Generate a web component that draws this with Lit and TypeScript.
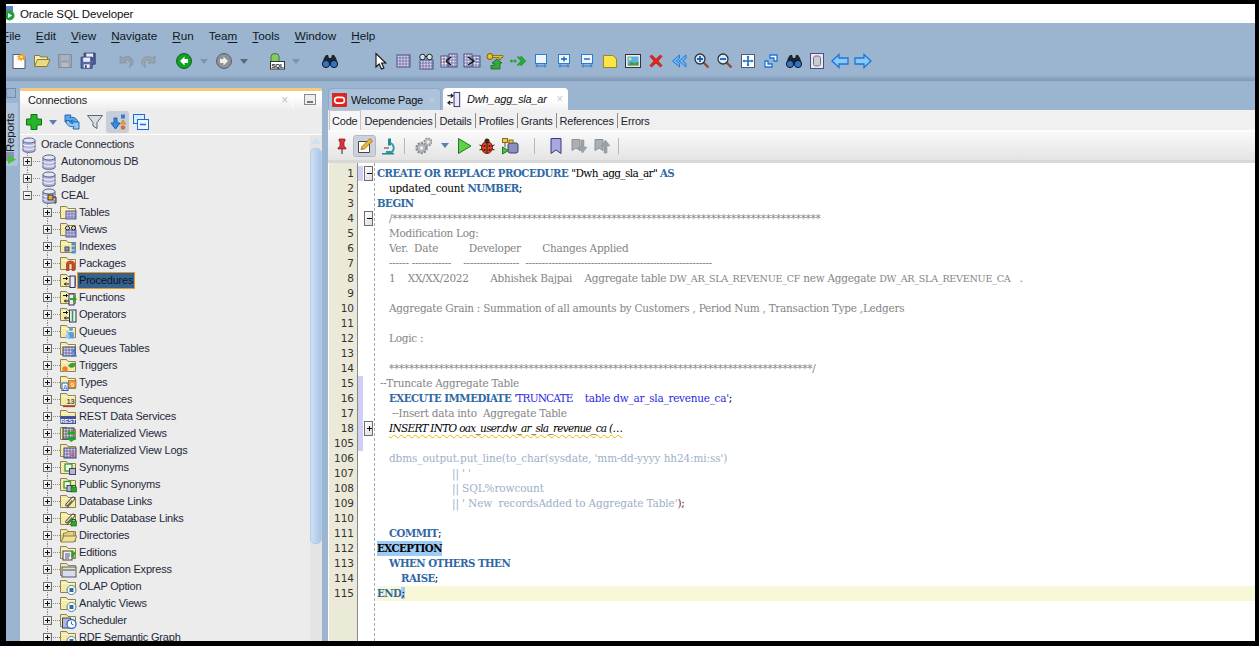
import { LitElement, html, css, svg, nothing } from 'lit';
import { customElement } from 'lit/decorators.js';

// ---- toolbar icons, all on an 18x18 box
const floppy = (c: string, d: string) => svg`<path d="M2.5 2.5h13v13h-13z" fill="${c}" stroke="${d}"/><path d="M5 3h8v5H5z" fill="#e8ecf4"/><path d="M5.5 11h7v4h-7z" fill="#f4f4f4"/><path d="M7 12h2v3H7z" fill="${d}"/>`;
const binoc = svg`<path d="M3 6l2-3h2l1 3h2l1-3h2l2 3 2 6H1z" fill="#20242c"/><circle cx="5" cy="12" r="3.6" fill="#2f76c8" stroke="#15181f"/><circle cx="13" cy="12" r="3.6" fill="#2f76c8" stroke="#15181f"/>`;
const gridLines = (x: number, y: number, w: number, h: number, f = '#d9d5ee', s = '#4c4c8a') => {
  const out = [svg`<rect x="${x}" y="${y}" width="${w}" height="${h}" fill="${f}" stroke="${s}"/>`];
  for (let i = x + 3; i < x + w; i += 3) out.push(svg`<path d="M${i} ${y}v${h}" stroke="${s}" stroke-width=".6"/>`);
  for (let j = y + 3; j < y + h; j += 3) out.push(svg`<path d="M${x} ${j}h${w}" stroke="${s}" stroke-width=".6"/>`);
  return out;
};
const tableLegs = (inner: unknown) => svg`<rect x="3.5" y="2.5" width="11" height="9" fill="#eef5fd" stroke="#2a7bd8"/><path d="M5 11.5v4M13 11.5v4M3.5 14h11" stroke="#2a7bd8" fill="none"/>${inner}`;
const lens = (inner: unknown) => svg`<path d="M10.5 10.5l5 5" stroke="#8a4a3a" stroke-width="2.4"/><circle cx="7" cy="7" r="5" fill="#d8ecff" stroke="#30343c" stroke-width="1.3"/>${inner}`;

const TOOL: Record<string, unknown> = {
  newfile: svg`<path d="M3 2.500h9l3 3v11H3z" fill="#fdfdfd" stroke="#55597a"/><path d="M11 1l1.200 2.200L14.600 2l-.6 2.400L16.400 5l-2.200 1.200L15 8.600l-2.600-1L11 9.600 10 7.400 7.600 8l1-2.400L6.600 4l2.600-.4z" fill="#f6a21a"/><circle cx="11.400" cy="5" r="1.300" fill="#ffe98a"/>`,
  open: svg`<path d="M1.500 14.500V3.500h5l1 1.500h7v2.500" fill="#f5eeb6" stroke="#8b7a30"/><path d="M1.500 14.500L4.500 7.500h12.500l-3 7z" fill="#eadb83" stroke="#8b7a30"/>`,
  save: svg`<path d="M2.500 2.500h13v13h-13z" fill="#9ca6b2" stroke="#858e9a"/><path d="M5 3h8v5H5z" fill="#a9b2bd"/><path d="M5.500 11h7v4h-7z" fill="#b5bcc5"/>`,
  saveall: svg`<g transform="translate(3 -1) scale(.85)">${floppy('#4f5b96', '#2e3668')}</g><g transform="translate(0 3) scale(.85)">${floppy('#5b68a8', '#2e3668')}</g>`,
  undo: svg`<path d="M3 4v7h7L7.600 8.600c3-1.600 5.600 0 5.600 3.400 0 1.400-.5 2.600-1.200 3.400 3.400-1.400 4.600-4 4-6.600C15 4.600 10 3.300 6 6.100z" fill="#97a2ae" stroke="#7f8a97" stroke-width=".6"/>`,
  redo: svg`<g transform="matrix(-1 0 0 1 18 0)"><path d="M3 4v7h7L7.600 8.600c3-1.600 5.600 0 5.600 3.400 0 1.400-.5 2.600-1.200 3.400 3.400-1.400 4.600-4 4-6.600C15 4.600 10 3.300 6 6.100z" fill="#9aa5b0" stroke="#808b98" stroke-width=".6"/></g>`,
  back: svg`<circle cx="9" cy="9" r="7.500" fill="#12a024" stroke="#0b6a18"/><path d="M9.500 4.500L5 9l4.500 4.500V11H13V7H9.500z" fill="#fff"/>`,
  fwd: svg`<circle cx="9" cy="9" r="7.500" fill="#8c9298" stroke="#5d6268"/><path d="M8.500 4.500L13 9l-4.500 4.500V11H5V7h3.500z" fill="#eee"/>`,
  sql: svg`<ellipse cx="8" cy="4.500" rx="4" ry="3" fill="#86c96a" stroke="#3d7f2c"/><path d="M4 4.500v5h8v-5" fill="#86c96a" stroke="#3d7f2c"/><rect x="3.500" y="9.500" width="14" height="7.500" fill="#fff" stroke="#333"/><text x="10.500" y="15.600" font-size="6.200" font-weight="700" text-anchor="middle" font-family="Liberation Sans" fill="#111">SQL</text>`,
  binoc,
  cursor: svg`<path d="M5 1.500v13.500l3.200-3 2.300 5 2.400-1.100-2.300-4.900h4.200z" fill="#fff" stroke="#111" stroke-width="1.100"/>`,
  grid: svg`${gridLines(3, 3, 13, 12)}`,
  glass: svg`${gridLines(3, 8, 13, 9)}<circle cx="5.500" cy="5" r="2.800" fill="#c8e8ee" stroke="#222"/><circle cx="12.500" cy="5" r="2.800" fill="#c8e8ee" stroke="#222"/><path d="M8 4.500h2" stroke="#222"/>`,
  diff1: svg`${gridLines(1, 4, 7, 11, '#f4f2fb')}${gridLines(9, 2, 8, 13, '#e5e2f4')}<path d="M3 7h1.500M3 10h1.500" stroke="#e03030"/><path d="M6 9l5-4M6 9l5 4" stroke="#111" stroke-width="1.400"/>`,
  diff2: svg`${gridLines(1, 2, 8, 13, '#e5e2f4')}${gridLines(10, 4, 7, 11, '#f4f2fb')}<path d="M13 7h2M13 10h2" stroke="#2060d0"/><path d="M5 5l6 4-6 4" stroke="#111" stroke-width="1.400" fill="none"/>`,
  key: svg`<circle cx="4" cy="4.500" r="3" fill="#f0c020" stroke="#7a5b08"/><path d="M6.500 3.500H17v2h-2v2h-2v-2H6.500z" fill="#f0c020" stroke="#7a5b08" stroke-width=".7"/><path d="M5 17v-3.500h3V11H6l5-4 5 4h-2v6z" fill="#35a83a" stroke="#17641c" stroke-width=".8"/>`,
  dots: svg`<circle cx="2.500" cy="9" r="1.500" fill="#23a030"/><circle cx="6" cy="9" r="1.500" fill="#23a030"/><path d="M8.500 4.500L13 9l-4.500 4.500M11.500 4.500L16 9l-4.500 4.500" fill="none" stroke="#23a030" stroke-width="1.800"/>`,
  tbl: tableLegs(nothing),
  tblplus: tableLegs(svg`<path d="M6 7h6M9 4.500v5" stroke="#1c5aa8" stroke-width="1.300"/>`),
  tblminus: tableLegs(svg`<path d="M6 7h6" stroke="#1c5aa8" stroke-width="1.300"/>`),
  note: svg`<path d="M2.500 3.500h9.500l3.500 3.500v8.500h-13z" fill="#fde44a" stroke="#9a8a1c"/>`,
  image: svg`<rect x="1.500" y="2.500" width="15" height="13" fill="#eee" stroke="#333"/><rect x="3.500" y="4.500" width="11" height="9" fill="#59b4ea"/><path d="M3.500 13.500l4-4 3 2 4-2v4z" fill="#4c9a35"/><circle cx="6" cy="7" r="1.400" fill="#fbe65a"/>`,
  x: svg`<path d="M3 4.500L4.500 3 9 7l4.500-4L15 4.500 11 9l4 4.500-1.500 1.500L9 11l-4.500 4L3 13.500 7 9z" fill="#e5261a" stroke="#a31a10" stroke-width=".7"/>`,
  dbl: svg`<path d="M9.500 3L2.500 9l7 6v-3.500L6.500 9l3-2.500zM16 3L9 9l7 6v-3.500L13 9l3-2.500z" fill="#6ab4f4" stroke="#1c76d6" stroke-width=".9"/>`,
  zoomin: lens(svg`<path d="M4 7h6M7 4v6" stroke="#1d5fb0" stroke-width="1.800"/>`),
  zoomout: lens(svg`<path d="M4 7h6" stroke="#1d5fb0" stroke-width="1.800"/>`),
  fit: svg`<rect x="2.500" y="2.500" width="13" height="13" fill="#fff" stroke="#555a70"/><path d="M9 4v10M4 9h10" stroke="#1c6fd0" stroke-width="1.600"/><path d="M7.500 5.500L9 3.500l1.500 2M7.500 12.500L9 14.500l1.500-2M5.500 7.500L3.500 9l2 1.500M12.500 7.500L14.500 9l-2 1.500" fill="#1c6fd0"/>`,
  expand: svg`<path d="M3 9v6h7v-3H6V9zM15 9V3H8v3h4v3z" fill="#fff" stroke="#1c76d6" stroke-width="1.300"/>`,
  dbpage: svg`<rect x="2.500" y="1.500" width="13" height="15" fill="#e9e7f5" stroke="#4c4c8a"/><ellipse cx="9" cy="5.500" rx="3.500" ry="1.600" fill="#c8ccd4" stroke="#777"/><path d="M5.500 5.500v7c0 2 7 2 7 0v-7" fill="#c8ccd4" stroke="#777"/>`,
  left: svg`<path d="M1 9l7-6.500V6h9v6H8v3.500z" fill="#8cc8f8" stroke="#1c76d6" stroke-width="1.300"/>`,
  right: svg`<path d="M17 9l-7-6.500V6H1v6h9v3.500z" fill="#8cc8f8" stroke="#1c76d6" stroke-width="1.300"/>`,
  add: svg`<path d="M6 1.500h6V6h4.500v6H12v4.500H6V12H1.500V6H6z" fill="#27b52c" stroke="#0f6f14"/>`,
  refresh: svg`<path d="M2 2h6L7 4.500c4.500-1 8 1.500 8 6h-3.500c0-2.500-1.500-3.500-3.500-3L9.500 9H2z" fill="#5aa6ea" stroke="#1c5da8" stroke-width=".9"/><path d="M16 16h-6l1-2.500c-4.500 1-8-1.500-8-6h3.500c0 2.500 1.500 3.500 3.500 3L8.500 9H16z" fill="#8cc8f8" stroke="#1c5da8" stroke-width=".9"/>`,
  filter: svg`<path d="M1.500 2.500h15L11 9.500v6l-4-2.500V9.500z" fill="#d8dce6" stroke="#5e6478"/>`,
  sort: svg`<path d="M3 7h3V2h3v5h3l-4.500 6z" transform="translate(-1 3)" fill="#3a8be0" stroke="#1c5da8"/><rect x="12" y="1.500" width="4" height="4" fill="#3a7bd0"/><path d="M14 7l2.500 4h-5z" fill="#e9b020" stroke="#8b6a10" stroke-width=".5"/><circle cx="14" cy="14.500" r="2.300" fill="#e06a30"/>`,
  collapse: svg`<rect x="1.500" y="1.500" width="11" height="9" fill="#d9ebff" stroke="#1c6fd0"/><rect x="5.500" y="6.500" width="11" height="10" fill="#eef6ff" stroke="#1c6fd0"/><path d="M8 11.500h6" stroke="#1c6fd0" stroke-width="1.500"/>`,
  pin: svg`<path d="M6 2h6v2l-1 1v4l2 2v1H5v-1l2-2V5L6 4z" fill="#d8333a" stroke="#8a1a20" stroke-width=".7"/><path d="M9 12v5" stroke="#555" stroke-width="1.300"/>`,
  pencil: svg`<path d="M2.500 4.500h11v11h-11z" fill="#fff" stroke="#444"/><path d="M5 12.500l1-3 8-8 2.500 2.500-8 8z" fill="#f2b632" stroke="#7a5c14" stroke-width=".7"/>`,
  micro: svg`<path d="M3 16h12v1.500H3zM9 1.500h3v7H9z" fill="#1f8a90"/><path d="M11 6c4 1 5 6 2 9H7" fill="none" stroke="#2c9aa0" stroke-width="1.800"/><path d="M5 11h5" stroke="#777" stroke-width="1.500"/>`,
  gears: svg`<circle cx="7.500" cy="11" r="5" fill="#b4b8bc" stroke="#8a8e92" stroke-width="2.400" stroke-dasharray="2 1.200"/><circle cx="7.500" cy="11" r="1.800" fill="#eee"/><circle cx="14" cy="5" r="3.600" fill="#c4c8cc" stroke="#94989c" stroke-width="2" stroke-dasharray="1.800 1"/><circle cx="14" cy="5" r="1.300" fill="#eee"/>`,
  play: svg`<path d="M3.500 1.500L16 9 3.500 16.500z" fill="#5fd04a" stroke="#1d7d1f"/>`,
  bug: svg`<ellipse cx="9" cy="10.500" rx="5.500" ry="6" fill="#e8421a" stroke="#7a1a08"/><circle cx="9" cy="4" r="2.500" fill="#3a2a20"/><path d="M9 5v11M1.500 8l3 1M1.500 13l3-1M16.500 8l-3 1M16.500 13l-3-1" stroke="#222"/><circle cx="6.500" cy="9" r="1" fill="#222"/><circle cx="11.500" cy="9" r="1" fill="#222"/><circle cx="6.500" cy="13" r="1" fill="#222"/><circle cx="11.500" cy="13" r="1" fill="#222"/>`,
  plan: svg`<rect x="7" y="6" width="10" height="10" rx="2" fill="#8a8fbe" stroke="#3c3f70"/><rect x="1.500" y="1.500" width="5" height="4" fill="#f2c94a" stroke="#8a6a10"/><rect x="8" y="3" width="4" height="3" fill="#f2c94a" stroke="#8a6a10"/><path d="M1.500 10l6 3.500-6 3.500z" fill="#52c040" stroke="#1d7d1f"/><path d="M4 5.500V10" stroke="#555"/>`,
  mark: svg`<path d="M4 1.500h10v15l-5-3.500-5 3.500z" fill="#a9a7e0" stroke="#3a3a7a"/>`,
  marknext: svg`<path d="M2 2.500h8v11l-4-2.500-4 2.500z" fill="#aab0b6" stroke="#8a9096"/><path d="M11 3h3v7h3l-4.500 6L8 10h3z" fill="#9aa2a8" stroke="#8a9096" stroke-width=".5"/>`,
  markprev: svg`<path d="M2 2.500h8v11l-4-2.500-4 2.500z" fill="#aab0b6" stroke="#8a9096"/><path d="M11 16h3V9h3l-4.500-6L8 9h3z" fill="#9aa2a8" stroke="#8a9096" stroke-width=".5"/>`,
  oracle: svg`<rect x="0.500" y="1.500" width="16" height="15" fill="#e8201a" stroke="#a01510" stroke-width=".5"/><rect x="3" y="6" width="11" height="6.500" rx="3.200" fill="none" stroke="#fff" stroke-width="1.800"/>`,
  proc: svg`<rect x="8.500" y="1.500" width="6" height="15" fill="#e8e6f8" stroke="#30305a"/><path d="M1.500 5H7M5 3l2.500 2L5 7M7.500 12.500H2M4.500 10.500L2 12.500l2.500 2" fill="none" stroke="#111" stroke-width="1.100"/>`,
};

const toolIcon = (n: string, size = 18) => html`<svg class="ic" width="${size}" height="${size}" viewBox="0 0 18 18">${TOOL[n]}</svg>`;

// ---- tree icons
const db = (c = '#b4b8dc', s = '#5a5e8a') => svg`<path d="M2 3.500v10c0 2.400 12 2.400 12 0v-10" fill="${c}" stroke="${s}"/><ellipse cx="8" cy="3.500" rx="6" ry="2.500" fill="#e4e6f4" stroke="${s}"/><path d="M2 7c0 2.400 12 2.400 12 0M2 10.500c0 2.400 12 2.400 12 0" fill="none" stroke="#fff" stroke-width=".9"/>`;
const folderBase = svg`<path d="M.5 14.500V2.500h6l1.500 2h7.500v10z" fill="#f4ebaa" stroke="#8f8548"/><path d="M1.500 5.500h13" stroke="#fff8cc"/>`;
const arrows = svg`<path d="M3 6.500h4.500M6 5l1.500 1.500L6 8M9 12H4.500M6 10.500L4.500 12 6 13.500" fill="none" stroke="#111"/>`;
const clip = svg`<path d="M6 15l7-8c2-2.500-1-4-2.500-2L5 11c-1 1.500 .5 2.500 1.500 1.500L11 7.500" fill="none" stroke="#555" stroke-width="1.100" transform="translate(1 0)"/>`;
const lock = svg`<rect x="11" y="11" width="5.500" height="5" fill="#2aa82a" stroke="#0f5f0f" stroke-width=".6"/><path d="M12 11V9.500h3.500V11" fill="none" stroke="#0f5f0f"/>`;
const cube = svg`<circle cx="11.500" cy="12" r="4.500" fill="#fff" stroke="#4a7ab0"/><rect x="9.500" y="10" width="4" height="4" fill="#2f6f8f"/>`;

const OVER: Record<string, unknown> = {
  tables: gridLines(6, 7, 10, 8, '#c9c5e6', '#5a5a9a'),
  views: svg`${gridLines(6, 9, 10, 7, '#c9c5e6', '#5a5a9a')}<circle cx="7.500" cy="7" r="2" fill="#cfe6ee" stroke="#222"/><circle cx="13.500" cy="7" r="2" fill="#cfe6ee" stroke="#222"/>`,
  indexes: svg`<rect x="5" y="9" width="4" height="4" fill="#8a92c8" stroke="#445"/><rect x="11.500" y="4.500" width="4" height="3" fill="#4a90d8"/><rect x="11.500" y="8.500" width="4" height="3" fill="#4a90d8"/><rect x="11.500" y="12.500" width="4" height="3" fill="#4a90d8"/>`,
  packages: svg`<path d="M6.500 15.500v-7c0-3.500 8-3.500 8 0v7h-2.500v-6c0-1-3-1-3 0v6z" fill="#d8452e" stroke="#8a2214" stroke-width=".6"/>`,
  procedures: svg`${arrows}<rect x="10" y="4" width="5" height="11.500" fill="#eceafa" stroke="#30305a"/>`,
  functions: svg`${arrows}<rect x="9" y="5" width="5" height="11" fill="#eceafa" stroke="#30305a"/><path d="M10 9h3V6.500l4 3.500-4 3.500V11h-3z" fill="#2aa82a"/>`,
  operators: svg`${arrows}<rect x="9.500" y="4" width="6.500" height="12" fill="#eceafa" stroke="#30305a"/><path d="M12.500 5v10" stroke="#2aa82a" stroke-width="1.500"/>`,
  queues: svg`<circle cx="11" cy="6" r="2" fill="#5a9ee0"/><path d="M8 15.500V10c0-1.500 6-1.500 6 0v5.500z" fill="#5a9ee0"/><circle cx="7.500" cy="9" r="1.500" fill="#9cc6ee"/><path d="M5.500 15.500V12c0-1 4-1 4 0v3.500z" fill="#9cc6ee"/>`,
  qtables: svg`${gridLines(3, 7, 12, 9, '#d8d4f0', '#3a3a7a')}<circle cx="14" cy="11" r="1.700" fill="#3a80d0"/><path d="M11 16.500c0-3 6-3 6 0z" fill="#3a80d0"/>`,
  triggers: svg`<path d="M8 9c2-4 6-4 8-2-1 4-5 5-8 2z" fill="#3fa03a"/><circle cx="5" cy="12" r="2.800" fill="#f08030"/>`,
  types: svg`<rect x="2" y="9" width="6" height="7.500" fill="#fff" stroke="#2060c0"/><text x="5" y="15.500" font-size="6.500" text-anchor="middle" fill="#2060c0" font-family="Liberation Sans">A</text><rect x="8.500" y="6.500" width="7.500" height="7" fill="#f09a40" stroke="#a05a10" stroke-width=".6"/><text x="12.200" y="12.500" font-size="6" text-anchor="middle" fill="#fff" font-family="Liberation Sans">9</text>`,
  sequences: svg`<text x="10.500" y="13" font-size="7.500" font-weight="700" text-anchor="middle" fill="#555" font-family="Liberation Sans">13</text><path d="M3 15.500h12" stroke="#c8302a" stroke-width="1.300"/>`,
  rest: svg`<rect x=".5" y="8" width="15.500" height="8" fill="#45509a"/><text x="8.200" y="14.700" font-size="6" font-weight="700" text-anchor="middle" fill="#fff" font-family="Liberation Sans">REST</text>`,
  matviews: svg`${gridLines(3, 3, 11, 11, '#d8d4f0', '#333')}<path d="M7 8l3-3v2h5v2h-5v2zM16 11l-3 3v-2H8v2l3 3 5-3z" fill="#25a52a"/>`,
  matlogs: svg`${gridLines(4, 6, 12, 10, '#d8d4f0', '#3a3a7a')}<path d="M10.500 11h4M10.500 13.500h4" stroke="#e05030"/>`,
  synonyms: svg`<rect x="5" y="5" width="7" height="7" fill="#eef8e0" stroke="#3a9a3a" stroke-width="1.300"/><rect x="9.500" y="9.500" width="6" height="6" fill="#b4b4e0" stroke="#445"/>`,
  publicsyn: svg`<rect x="4" y="5.500" width="6.500" height="6.500" fill="#eef8e0" stroke="#3a9a3a" stroke-width="1.300"/><rect x="7" y="9.500" width="5" height="6" fill="#b4b4e0" stroke="#445"/>${lock}`,
  dblink: clip,
  pubdblink: svg`${clip}${lock}`,
  dirs: svg`<path d="M1 15V8l2-1v7z" fill="#ddc878"/><path d="M3.500 14V6h3l1-1.500H14V14z" fill="#e2d07e" stroke="#8f8548"/><path d="M1 15l3-6h13l-3 6z" fill="#f0e09a" stroke="#8f8548"/>`,
  editions: svg`<rect x="3" y="7" width="9" height="9" fill="#f0effa" stroke="#445"/><path d="M5 10h5M5 12h5M5 14h4" stroke="#556"/><path d="M12 6l4 3.500-2 2 1 3-4-2z" fill="#30a030"/>`,
  apex: svg`<rect x="2" y="6" width="14" height="10" fill="#dcdcf0" stroke="#556"/><path d="M2 9h14" stroke="#8a9a70" stroke-width="1.800"/>`,
  olap: cube,
  analytic: cube,
  scheduler: svg`<rect x="2.500" y="6" width="8" height="10" fill="#b4b4e0" stroke="#445"/><circle cx="11.500" cy="12" r="4.500" fill="#fff" stroke="#2a6fc0" stroke-width="1.300"/><path d="M11.500 9.500V12l2 1" stroke="#2a6fc0" fill="none"/>`,
  rdf: cube,
};

const TREE: [string, string][] = [
  ['Tables', 'tables'], ['Views', 'views'], ['Indexes', 'indexes'], ['Packages', 'packages'],
  ['Procedures', 'procedures'], ['Functions', 'functions'], ['Operators', 'operators'], ['Queues', 'queues'],
  ['Queues Tables', 'qtables'], ['Triggers', 'triggers'], ['Types', 'types'], ['Sequences', 'sequences'],
  ['REST Data Services', 'rest'], ['Materialized Views', 'matviews'], ['Materialized View Logs', 'matlogs'],
  ['Synonyms', 'synonyms'], ['Public Synonyms', 'publicsyn'], ['Database Links', 'dblink'],
  ['Public Database Links', 'pubdblink'], ['Directories', 'dirs'], ['Editions', 'editions'],
  ['Application Express', 'apex'], ['OLAP Option', 'olap'], ['Analytic Views', 'analytic'],
  ['Scheduler', 'scheduler'], ['RDF Semantic Graph', 'rdf'],
];

// num, indent in px, then [class, text] pieces
type Line = [string, number, [string, string][]];
const stars = (n: number) => '*'.repeat(n);
const dashes = (n: number) => '-'.repeat(n);
const CODE: Line[] = [
  ['1', 0, [['k', 'CREATE OR REPLACE PROCEDURE '], ['q', '"Dwh_agg_sla_ar" '], ['k', 'AS']]],
  ['2', 12, [['', 'updated_count '], ['k', 'NUMBER'], ['', ';']]],
  ['3', 0, [['k', 'BEGIN']]],
  ['4', 12, [['c', '/' + stars(86)]]],
  ['5', 12, [['c', 'Modification Log:']]],
  ['6', 12, [['c', 'Ver.  Date          Developer       Changes Applied']]],
  ['7', 12, [['c', `${dashes(6)} ${dashes(12)}    ${dashes(17)}  ${dashes(57)}`]]],
  ['8', 12, [['c', '1    XX/XX/2022       Abhishek Bajpai    Aggregate table '], ['cu', 'DW_AR_SLA_REVENUE_CF'], ['c', ' new Aggegate '], ['cu', 'DW_AR_SLA_REVENUE_CA'], ['c', '   .']]],
  ['9', 0, []],
  ['10', 12, [['c', 'Aggregate Grain : Summation of all amounts by Customers , Period Num , Transaction Type ,Ledgers']]],
  ['11', 0, []],
  ['12', 12, [['c', 'Logic :']]],
  ['13', 0, []],
  ['14', 12, [['c', stars(85) + '/']]],
  ['15', 3, [['c', '--Truncate Aggregate Table']]],
  ['16', 12, [['k', 'EXECUTE IMMEDIATE '], ['su', "'TRUNCATE"], ['s', '    table dw_ar_sla_revenue_ca\''], ['', ';']]],
  ['17', 15, [['c', '--Insert data into  Aggregate Table']]],
  ['18', 12, [['w', 'INSERT INTO oax_user.dw_ar_sla_revenue_ca (…']]],
  ['105', 0, []],
  ['106', 12, [['d', "dbms_output.put_line(to_char(sysdate, 'mm-dd-yyyy hh24:mi:ss')"]]],
  ['107', 75, [['d', "|| ' '"]]],
  ['108', 75, [['d', '|| SQL%rowcount']]],
  ['109', 75, [['d', "|| ' New  recordsAdded to Aggregate Table'"], ['pn', ');']]],
  ['110', 0, []],
  ['111', 12, [['k', 'COMMIT'], ['', ';']]],
  ['112', 0, [['sel', 'EXCEPTION']]],
  ['113', 12, [['k', 'WHEN OTHERS THEN']]],
  ['114', 24, [['k', 'RAISE'], ['', ';']]],
  ['115', 0, [['k', 'END'], ['hit', ';']]],
];
const MARKED = new Set(['1', '15', '16', '17', '18', '105']);
const FOLD: Record<string, string> = { '1': '-', '4': '-', '18': '+' };

const MENU: [string, string, string][] = [
  ['', 'F', 'ile'], ['', 'E', 'dit'], ['', 'V', 'iew'], ['', 'N', 'avigate'], ['', 'R', 'un'],
  ['Tea', 'm', ''], ['', 'T', 'ools'], ['', 'W', 'indow'], ['', 'H', 'elp'],
];

@customElement('app-root')
export class AppRoot extends LitElement {
  static styles = css`
    :host {
      display: block;
      width: 1259px;
      height: 646px;
      box-sizing: border-box;
      padding: 4px 4px 5px 6px;
      background: #000;
      overflow: hidden;
      font-family: 'Liberation Sans', sans-serif;
      font-size: 11px;
      letter-spacing: -0.2px;
      color: #1c2430;
    }
    .ic { display: block; flex: none; }
    .frame { height: 100%; display: flex; flex-direction: column; background: #9bb5d0; overflow: hidden; }

    .title { height: 19px; flex: none; background: #fff; display: flex; align-items: center; font-size: 11.5px; letter-spacing: -0.1px; color: #111; }
    .title svg { margin: 0 5px 0 0; }

    .menu { height: 24px; flex: none; display: flex; align-items: center; font-size: 11.7px; letter-spacing: 0; color: #101820; }
    .menu .mi { margin-right: 15px; }
    .menu .mi:first-child { margin-left: -4px; }
    .menu u { text-underline-offset: 2px; }

    .tools { height: 28px; flex: none; display: flex; align-items: center; padding-left: 1px; }
    .b { width: 23px; height: 22px; flex: none; display: flex; align-items: center; justify-content: center; }
    .dd { width: 17px; flex: none; display: flex; justify-content: center; }
    .dd::before { content: ''; border: 4px solid transparent; border-top: 5px solid #7f93aa; border-bottom: 0; }
    .dd.dark::before { border-top-color: #5e6a78; }
    .dd.blue::before { border-top-color: #5a7fb0; }
    .g12 { width: 12px; flex: none; } .g14 { width: 14px; flex: none; } .g15 { width: 15px; flex: none; } .g27 { width: 27px; flex: none; }
    .split { height: 6px; flex: none; background: linear-gradient(#9bb5d0, #7d97b6); }

    .main { flex: 1; min-height: 0; display: flex; }
    .side { width: 14px; flex: none; padding-top: 7px; display: flex; flex-direction: column; overflow: hidden; }
    .side .sicon { width: 10px; height: 10px; border: 1px solid #6f8fb2; margin-bottom: 5px; box-sizing: border-box; }
    .side .stab {
      height: 63px; width: 12px; background: #afc5dc; display: flex; flex-direction: column;
      border-radius: 0 0 3px 0; overflow: hidden;
    }
    .side .stxt {
      writing-mode: vertical-rl; transform: rotate(180deg); height: 46px; margin-top: 3px; width: 12px;
      line-height: 9px; font-size: 11.5px; color: #222; text-align: left; white-space: nowrap;
    }

    .left { width: 302px; flex: none; margin-top: 7px; display: flex; flex-direction: column; background: #ececec; border-radius: 3px 3px 0 0; overflow: hidden; }
    .lhead {
      height: 17px; padding-bottom: 2px; flex: none; border-top: 3px solid #f6c97c; display: flex; align-items: center;
      padding-left: 8px; background: linear-gradient(#fff 30%, #ececec); color: #222;
    }
    .lhead .nm { flex: 1; }
    .lhead .cl { color: #c0c0c0; font-size: 12px; margin-right: 4px; }
    .lhead .sp { width: 1px; height: 16px; background: #fff; margin-right: 11px; }
    .lhead .mini { width: 10px; height: 9px; border: 1px solid #8a8a8a; background: #eee; margin-right: 6px; display: flex; align-items: flex-end; justify-content: center; }
    .lhead .mini::before { content: ''; width: 6px; height: 2px; background: #777; margin-bottom: 1px; }
    .ltools { height: 24px; flex: none; display: flex; align-items: center; padding-left: 2px; }
    .ltools .on { background: #c7ced9; border-radius: 3px; }
    .ltools .dd { width: 15px; }

    .lbody { flex: 1; min-height: 0; display: flex; background: #ececec; border-top: 1px solid #fff; }
    .tree { flex: 1; min-width: 0; overflow: hidden; padding-top: 1px; }
    .row { height: 17px; display: flex; align-items: center; color: #1e2a38; white-space: nowrap; }
    .row .lbl { margin-left: 3px; padding: 0 1px; line-height: 15px; }
    .row .lbl.sub2 { margin-left: 1px; }
    .row .lbl.cur { background: #37628f; outline: 1px solid #e89a20; color: #0c1826; padding: 0 1px; }
    .exp {
      flex: none; height: 17px; display: flex; align-items: center; box-sizing: border-box;
      background-repeat: no-repeat;
      background-image:
        repeating-linear-gradient(to bottom, #8a8a8a 0 1px, transparent 1px 2px),
        repeating-linear-gradient(to right, #8a8a8a 0 1px, transparent 1px 2px);
    }
    .exp.l1 { width: 21px; padding-left: 3px; background-size: 1px 100%, 14px 1px; background-position: 7px 0, 7px 8px; }
    .exp.l1.end { background-size: 1px 50%, 14px 1px; }
    .exp.l2 { width: 40px; padding-left: 23px; background-size: 1px 100%, 13px 1px; background-position: 27px 0, 27px 8px; }
    .box { width: 9px; height: 9px; box-sizing: border-box; border: 1px solid #6e6e6e; background: linear-gradient(135deg, #fff, #ddd); display: flex; align-items: center; justify-content: center; position: relative; }
    .box::before { content: ''; width: 5px; height: 1px; background: #111; }
    .box.plus::after { content: ''; position: absolute; width: 1px; height: 5px; background: #111; }

    .sbar { width: 12px; flex: none; background: #e4e4e4; display: flex; flex-direction: column; align-items: center; }
    .sbar .up { border: 5px solid transparent; border-bottom: 6px solid #cfe0f2; border-top: 0; margin: 3px 0 4px; }
    .sbar .th { width: 12px; height: 396px; box-sizing: border-box; background: linear-gradient(to right, #cfe0f3, #a8c6e8); border: 1px solid #b4cbe4; border-radius: 5px; }

    .right { flex: 1; min-width: 0; margin-left: 6px; margin-top: 7px; display: flex; flex-direction: column; }
    .tabs { height: 22px; flex: none; display: flex; gap: 2px; align-items: flex-end; }
    .tab { height: 22px; box-sizing: border-box; display: flex; align-items: center; border-radius: 4px 4px 0 0; color: #111; white-space: nowrap; }
    .tab.off { width: 113px; background: #abc2da; padding-left: 3px; border: 1px solid #8fa8c4; border-bottom: 0; }
    .tab.off .t { margin-left: 3px; flex: 1; }
    .tab.on { width: 125px; background: linear-gradient(#fff 60%, #f0f0f0); padding-left: 3px; }
    .tab.on .t { font-style: italic; margin-left: 4px; flex: 1; }
    .tab .x { color: #c4ccd6; font-size: 12px; margin-right: 5px; }
    .sub { height: 21px; flex: none; display: flex; align-items: stretch; background: #f0f0f0; border-bottom: 1px solid #fff; box-sizing: border-box; padding-left: 1px; }
    .sub .st { display: flex; align-items: center; padding: 0 3px; border-left: 1px solid #8c8c8c; margin: 3px 0 2px; }
    .sub .st.first { border-left: 0; padding-left: 4px; }
    .sub .st.now { border: 1px solid #c4c4c4; border-bottom: 0; margin: 0; padding: 0 2px; background: #f6f6f6; }
    .etools { height: 29px; flex: none; display: flex; align-items: center; padding-left: 2px; background: linear-gradient(#fafafa, #e4e4e4); }
    .etools .on { background: #ccd2db; border: 1px solid #b4bac4; border-radius: 3px; box-sizing: border-box; }
    .etools .sep { width: 1px; height: 16px; background: #b8b8b8; flex: none; }
    .etools .dd { width: 14px; margin-left: 4px; }
    .sa { margin: 0 6px 0 5px; } .sb { margin: 0 9px 0 13px; } .sc { margin: 0 0 0 5px; }

    .editor { flex: 1; min-height: 0; display: flex; border-top: 3px solid #d8d8d8; background: #fff; overflow: hidden; padding-left: 1px; }
    .gut { width: 29px; flex: none; box-sizing: border-box; padding-top: 3px; background: #ebe9d8; border-right: 1px solid #8a8a8a; text-align: right; font-family: 'DejaVu Sans', sans-serif; font-size: 10.5px; letter-spacing: 0; color: #333; }
    .gut div { height: 15px; line-height: 15px; padding-right: 3px; }
    .mk { width: 5px; flex: none; padding-top: 3px; }
    .mk div { height: 15px; }
    .mk .on { background: #cfcff7; }
    .fd { width: 12px; flex: none; box-sizing: border-box; padding-top: 3px; border-right: 1px dashed #aaa; }
    .fd div { height: 15px; display: flex; align-items: center; padding-left: 1px; }
    .code { flex: 1; min-width: 0; margin-left: 2px; padding-top: 3px; font-family: 'DejaVu Serif', serif; font-size: 10.5px; color: #000; }
    .ln { height: 15px; line-height: 15px; white-space: pre; letter-spacing: -0.27px; }
    .ln.cur { background: #f8f8d8; }
    .k { font-weight: 700; color: #2f68a5; font-size: 10.2px; letter-spacing: -0.5px; }
    .q { letter-spacing: -0.6px; }
    .c { color: #858585; }
    .cu { color: #858585; font-size: 9.6px; }
    .s { color: #2a2ae0; }
    .su { color: #2a2ae0; letter-spacing: -0.8px; }
    .d { color: #9cb0c8; letter-spacing: -0.11px; }
    .pn { color: #7a1c3c; }
    .w { font-style: italic; color: #000; letter-spacing: -0.7px; text-decoration: underline wavy #e8b800 1px; text-underline-offset: 2px; }
    .sel { font-weight: 700; background: #9ccbf6; color: #000; display: inline-block; font-size: 10.2px; letter-spacing: -0.5px; }
    .hit { background: #a0ccf6; }
  `;

  private btn(n: string, on = false) {
    return html`<div class="b ${on ? 'on' : ''}">${toolIcon(n)}</div>`;
  }

  render() {
    const bar2 = ['cursor', 'grid', 'glass', 'diff1', 'diff2', 'key', 'dots', 'tbl', 'tblplus', 'tblminus', 'note', 'image', 'x', 'dbl', 'zoomin', 'zoomout', 'fit', 'expand', 'binoc', 'dbpage', 'left', 'right'];
    return html`
      <div class="frame">
        <div class="title">
          <svg class="ic" width="9" height="16" viewBox="0 0 9 16"><path d="M0 0h7v6H0z" fill="#5c86c0"/><circle cx="3.500" cy="9.500" r="5" fill="#22a038"/><path d="M2 7l4 2.500L2 12z" fill="#fff"/></svg>
          Oracle SQL Developer
        </div>
        <div class="menu">
          ${MENU.map(([a, u, b]) => html`<span class="mi">${a}<u>${u}</u>${b}</span>`)}
        </div>
        <div class="tools">
          ${['newfile', 'open', 'save', 'saveall'].map((n) => this.btn(n))}
          <div class="g15"></div>
          ${this.btn('undo')}${this.btn('redo')}
          <div class="g12"></div>
          ${this.btn('back')}<div class="dd"></div>${this.btn('fwd')}<div class="dd dark"></div>
          <div class="g12"></div>
          ${this.btn('sql')}<div class="dd"></div>
          <div class="g14"></div>
          ${this.btn('binoc')}
          <div class="g27"></div>
          ${bar2.map((n) => this.btn(n))}
        </div>
        <div class="split"></div>

        <div class="main">
          <div class="side">
            <div class="sicon"></div>
            <div class="stab">
              <div class="stxt">Reports</div>
              <svg class="ic" width="12" height="13" viewBox="0 0 12 13"><path d="M0 0h8v9H0z" fill="#8a8fbe"/><path d="M2 3l8 4.500L2 12z" fill="#4cc038"/></svg>
            </div>
          </div>

          <div class="left">
            <div class="lhead">
              <span class="nm">Connections</span>
              <span class="cl">×</span><span class="sp"></span><span class="mini"></span>
            </div>
            <div class="ltools">
              ${this.btn('add')}<div class="dd blue"></div>
              ${this.btn('refresh')}${this.btn('filter')}${this.btn('sort', true)}${this.btn('collapse')}
            </div>
            <div class="lbody">
              <div class="tree">
                <div class="row">
                  <svg class="ic" style="margin-left:1px" width="16" height="16" viewBox="0 0 16 16">${db()}</svg>
                  <span class="lbl">Oracle Connections</span>
                </div>
                ${['Autonomous DB', 'Badger'].map((n) => html`
                  <div class="row">
                    <div class="exp l1"><div class="box plus"></div></div>
                    <svg class="ic" width="16" height="16" viewBox="0 0 16 16">${db()}</svg>
                    <span class="lbl">${n}</span>
                  </div>`)}
                <div class="row">
                  <div class="exp l1 end"><div class="box"></div></div>
                  <svg class="ic" width="16" height="16" viewBox="0 0 16 16">${db()}<rect x="7" y="7" width="5" height="5" fill="#e9b020" stroke="#333"/><path d="M12 9h3v6h-2" fill="none" stroke="#333"/></svg>
                  <span class="lbl">CEAL</span>
                </div>
                ${TREE.map(([n, k]) => html`
                  <div class="row">
                    <div class="exp l2"><div class="box plus"></div></div>
                    <svg class="ic" width="17" height="17" viewBox="0 0 17 17">${folderBase}${OVER[k]}</svg>
                    <span class="lbl sub2 ${n === 'Procedures' ? 'cur' : ''}">${n}</span>
                  </div>`)}
              </div>
              <div class="sbar"><div class="up"></div><div class="th"></div></div>
            </div>
          </div>

          <div class="right">
            <div class="tabs">
              <div class="tab off">${toolIcon('oracle', 16)}<span class="t">Welcome Page</span><span class="x">×</span></div>
              <div class="tab on">${toolIcon('proc', 17)}<span class="t">Dwh_agg_sla_ar</span><span class="x">×</span></div>
            </div>
            <div class="sub">
              <div class="st now">Code</div>
              ${['Dependencies', 'Details', 'Profiles', 'Grants', 'References', 'Errors'].map((t, i) => html`<div class="st ${i === 0 ? 'first' : ''}">${t}</div>`)}
            </div>
            <div class="etools">
              ${this.btn('pin')}${this.btn('pencil', true)}${this.btn('micro')}
              <div class="sep sa"></div>
              ${this.btn('gears')}<div class="dd blue"></div>
              ${this.btn('play')}${this.btn('bug')}${this.btn('plan')}
              <div class="sep sb"></div>
              ${this.btn('mark')}${this.btn('marknext')}${this.btn('markprev')}
              <div class="sep sc"></div>
            </div>
            <div class="editor">
              <div class="gut">${CODE.map((l) => html`<div>${l[0]}</div>`)}</div>
              <div class="mk">${CODE.map((l) => html`<div class="${MARKED.has(l[0]) ? 'on' : ''}"></div>`)}</div>
              <div class="fd">${CODE.map((l) => html`<div>${FOLD[l[0]] ? html`<div class="box ${FOLD[l[0]] === '+' ? 'plus' : ''}"></div>` : nothing}</div>`)}</div>
              <div class="code">
                ${CODE.map(([n, ind, parts]) => html`<div class="ln ${n === '115' ? 'cur' : ''}" style="padding-left:${ind}px">${parts.map(([c, t]) => html`<span class="${c}">${t}</span>`)}</div>`)}
              </div>
            </div>
          </div>
        </div>
      </div>
    `;
  }
}
